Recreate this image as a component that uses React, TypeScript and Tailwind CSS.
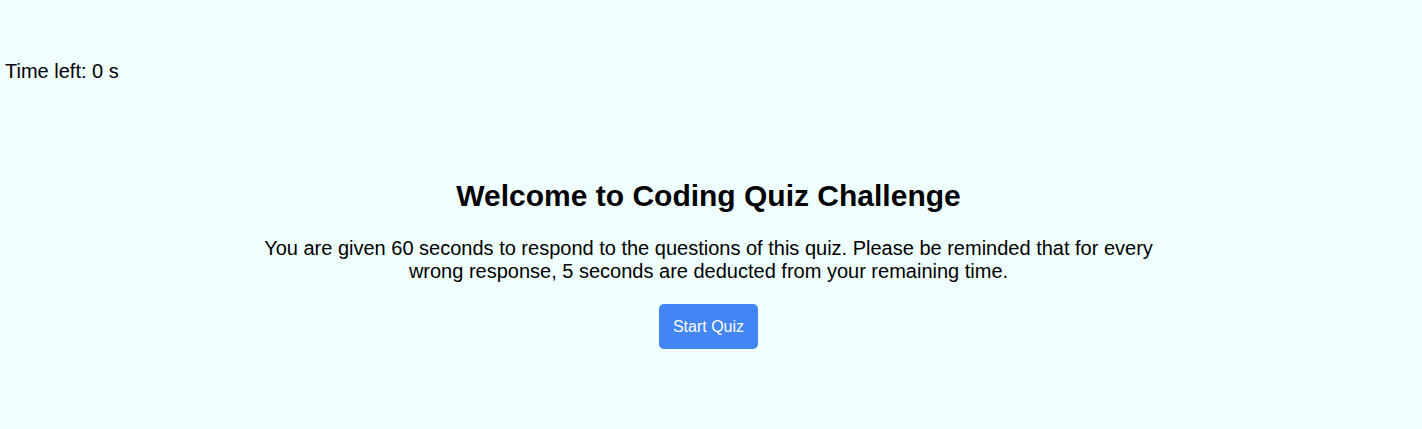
import React from 'react';

const App: React.FC = () => {
  return (
    <div className="min-h-[429px] w-full bg-[#f0ffff] text-black font-['Liberation_Sans',Arial,sans-serif]">
      <header className="pt-[60px] pl-[5px]">
        <p className="text-[20px] leading-[23px]">Time left: 0 s</p>
      </header>

      <main className="mt-[96px] pr-[5px] flex flex-col items-center text-center">
        <h1 className="text-[30px] leading-[34px] font-bold">Welcome to Coding Quiz Challenge</h1>
        <p className="mt-[24px] max-w-[900px] text-[20px] leading-[23px]">
          You are given 60 seconds to respond to the questions of this quiz. Please be reminded that for every
          wrong response, 5 seconds are deducted from your remaining time.
        </p>
        <button className="mt-[21px] h-[45px] w-[99px] rounded-[5px] bg-[#4285f4] text-white text-[16px]">
          Start Quiz
        </button>
      </main>
    </div>
  );
};

export default App;
